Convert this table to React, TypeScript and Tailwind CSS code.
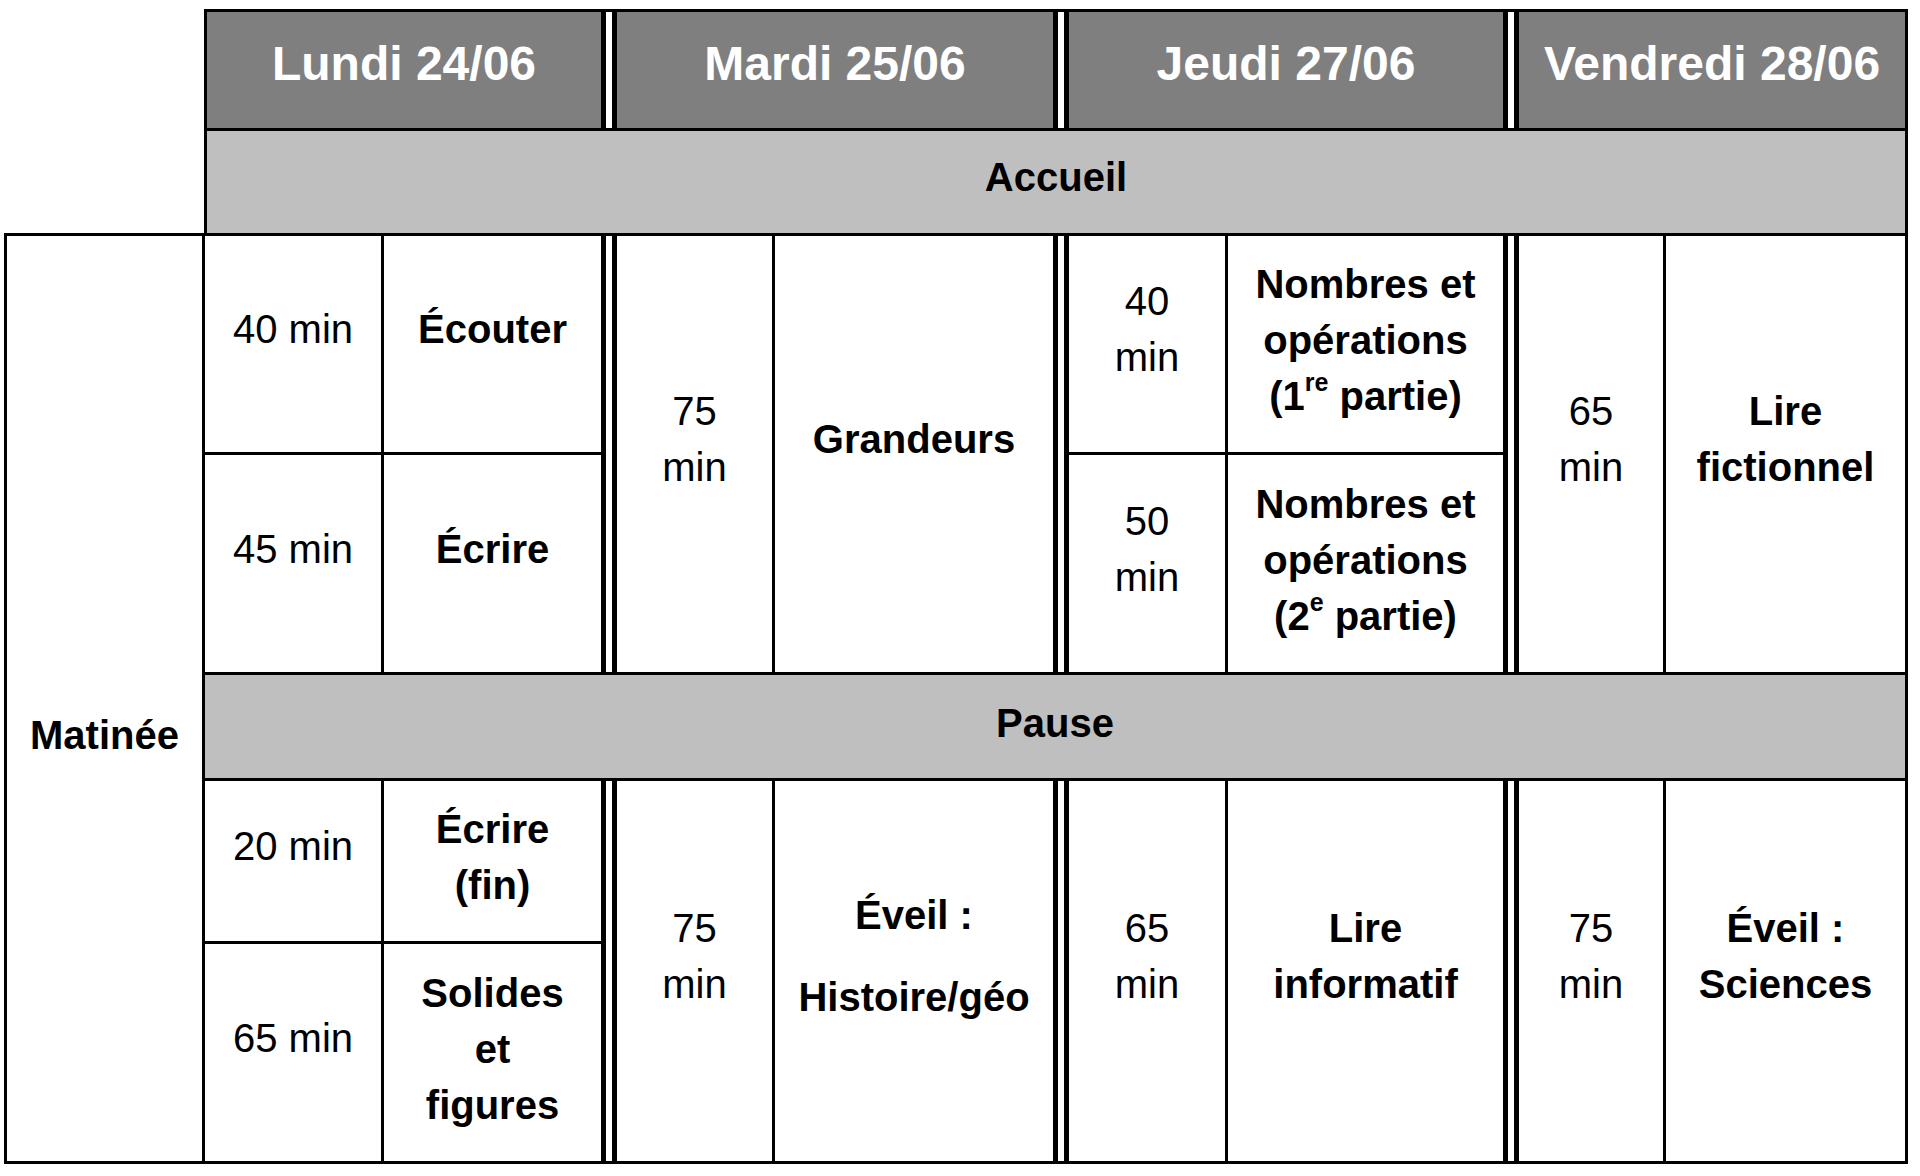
import React from "react";

function Dbl() {
  return <div className="w-[16px] shrink-0 self-stretch border-x-[5px] border-black bg-white" />;
}

function Cell({
  children,
  w,
  h,
  br = false,
  bb = false,
  bold = false,
  pb = "pb-[30px]",
}: {
  children: React.ReactNode;
  w: string;
  h: string;
  br?: boolean;
  bb?: boolean;
  bold?: boolean;
  pb?: string;
}) {
  return (
    <div
      className={
        "flex shrink-0 flex-col items-center justify-center text-center text-[40px] leading-[56px] text-black " +
        w +
        " " +
        h +
        " " +
        pb +
        (br ? " border-r-[3px] border-black" : "") +
        (bb ? " border-b-[3px] border-black" : "") +
        (bold ? " font-bold" : "")
      }
    >
      {children}
    </div>
  );
}

function Head({ label, w }: { label: string; w: string }) {
  return (
    <div
      className={
        "flex h-[116px] shrink-0 items-center justify-center bg-[#7f7f7f] pb-[12px] text-[48px] font-bold text-white " +
        w
      }
    >
      {label}
    </div>
  );
}

export default function App() {
  return (
    <div className="min-h-screen bg-white font-['Liberation_Sans',Arial,sans-serif]">
      <div className="pl-[4px] pt-[9px]">
        {/* Top block: day headers + Accueil */}
        <div className="ml-[200px] w-[1704px] border-x-[3px] border-t-[3px] border-black">
          <div className="flex border-b-[3px] border-black">
            <Head label="Lundi 24/06" w="w-[394px]" />
            <Dbl />
            <Head label="Mardi 25/06" w="w-[436px]" />
            <Dbl />
            <Head label="Jeudi 27/06" w="w-[434px]" />
            <Dbl />
            <Head label="Vendredi 28/06" w="w-[386px]" />
          </div>
          <div className="flex h-[102px] items-center justify-center bg-[#bfbfbf] pb-[10px] text-[40px] font-bold text-black">
            Accueil
          </div>
        </div>

        {/* Body */}
        <div className="flex h-[931px] w-[1904px] border-[3px] border-black">
          <div className="flex w-[198px] shrink-0 items-center justify-center border-r-[3px] border-black pt-[72px] text-[40px] font-bold text-black">
            Matinée
          </div>
          <div className="flex w-[1700px] flex-col">
            {/* Row 1 */}
            <div className="flex h-[439px] border-b-[3px] border-black">
              {/* Lundi */}
              <div className="flex w-[396px] flex-col">
                <div className="flex border-b-[3px] border-black">
                  <Cell w="w-[179px]" h="h-[216px]" br>
                    40 min
                  </Cell>
                  <Cell w="w-[217px]" h="h-[216px]" bold>
                    Écouter
                  </Cell>
                </div>
                <div className="flex">
                  <Cell w="w-[179px]" h="h-[217px]" br>
                    45 min
                  </Cell>
                  <Cell w="w-[217px]" h="h-[217px]" bold>
                    Écrire
                  </Cell>
                </div>
              </div>
              <Dbl />
              {/* Mardi */}
              <div className="flex w-[436px]">
                <Cell w="w-[158px]" h="h-[436px]" br>
                  <span>75</span>
                  <span>min</span>
                </Cell>
                <Cell w="w-[278px]" h="h-[436px]" bold>
                  Grandeurs
                </Cell>
              </div>
              <Dbl />
              {/* Jeudi */}
              <div className="flex w-[434px] flex-col">
                <div className="flex border-b-[3px] border-black">
                  <Cell w="w-[159px]" h="h-[216px]" br>
                    <span>40</span>
                    <span>min</span>
                  </Cell>
                  <Cell w="w-[275px]" h="h-[216px]" bold pb="pb-[8px]">
                    <span>Nombres et</span>
                    <span>opérations</span>
                    <span>
                      (1<sup className="top-[-0.75em] text-[25px]">re</sup> partie)
                    </span>
                  </Cell>
                </div>
                <div className="flex">
                  <Cell w="w-[159px]" h="h-[217px]" br>
                    <span>50</span>
                    <span>min</span>
                  </Cell>
                  <Cell w="w-[275px]" h="h-[217px]" bold pb="pb-[8px]">
                    <span>Nombres et</span>
                    <span>opérations</span>
                    <span>
                      (2<sup className="top-[-0.75em] text-[25px]">e</sup> partie)
                    </span>
                  </Cell>
                </div>
              </div>
              <Dbl />
              {/* Vendredi */}
              <div className="flex w-[386px]">
                <Cell w="w-[147px]" h="h-[436px]" br>
                  <span>65</span>
                  <span>min</span>
                </Cell>
                <Cell w="w-[239px]" h="h-[436px]" bold>
                  <span>Lire</span>
                  <span>fictionnel</span>
                </Cell>
              </div>
            </div>

            {/* Pause */}
            <div className="flex h-[106px] items-center justify-center border-b-[3px] border-black bg-[#bfbfbf] pb-[7px] text-[40px] font-bold text-black">
              Pause
            </div>

            {/* Row 2 */}
            <div className="flex h-[380px]">
              {/* Lundi */}
              <div className="flex w-[396px] flex-col">
                <div className="flex border-b-[3px] border-black">
                  <Cell w="w-[179px]" h="h-[160px]" br>
                    20 min
                  </Cell>
                  <Cell w="w-[217px]" h="h-[160px]" bold pb="pb-[8px]">
                    <span>Écrire</span>
                    <span>(fin)</span>
                  </Cell>
                </div>
                <div className="flex">
                  <Cell w="w-[179px]" h="h-[217px]" br>
                    65 min
                  </Cell>
                  <Cell w="w-[217px]" h="h-[217px]" bold pb="pb-[8px]">
                    <span>Solides</span>
                    <span>et</span>
                    <span>figures</span>
                  </Cell>
                </div>
              </div>
              <Dbl />
              {/* Mardi */}
              <div className="flex w-[436px]">
                <Cell w="w-[158px]" h="h-[380px]" br>
                  <span>75</span>
                  <span>min</span>
                </Cell>
                <Cell w="w-[278px]" h="h-[380px]" bold>
                  <span className="mb-[26px]">Éveil :</span>
                  <span>Histoire/géo</span>
                </Cell>
              </div>
              <Dbl />
              {/* Jeudi */}
              <div className="flex w-[434px]">
                <Cell w="w-[159px]" h="h-[380px]" br>
                  <span>65</span>
                  <span>min</span>
                </Cell>
                <Cell w="w-[275px]" h="h-[380px]" bold>
                  <span>Lire</span>
                  <span>informatif</span>
                </Cell>
              </div>
              <Dbl />
              {/* Vendredi */}
              <div className="flex w-[386px]">
                <Cell w="w-[147px]" h="h-[380px]" br>
                  <span>75</span>
                  <span>min</span>
                </Cell>
                <Cell w="w-[239px]" h="h-[380px]" bold>
                  <span>Éveil :</span>
                  <span>Sciences</span>
                </Cell>
              </div>
            </div>
          </div>
        </div>
      </div>
    </div>
  );
}
